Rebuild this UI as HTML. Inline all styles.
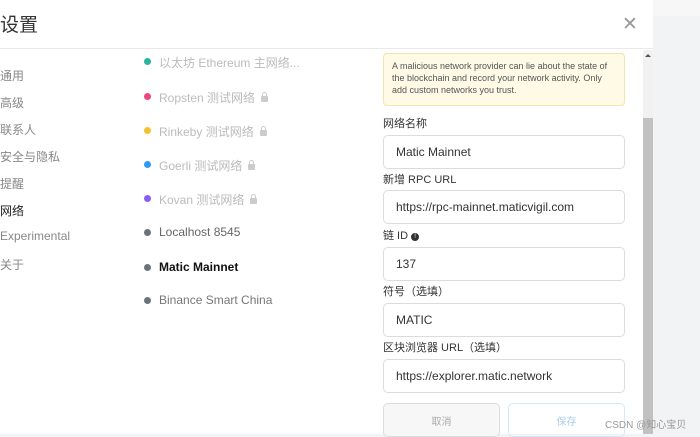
<!DOCTYPE html>
<html><head><meta charset="utf-8"><style>
*{margin:0;padding:0;box-sizing:border-box}
body{width:700px;height:434px;overflow:hidden;background:#f2f3f4;font-family:"Liberation Sans","Noto Sans CJK SC",sans-serif;position:relative}
.modal{position:absolute;left:0;top:0;width:653px;height:434px;background:#fff}
.abs{position:absolute;white-space:nowrap}
.title{left:0;top:10px;font-size:19px;color:#333}
.close{left:622px;top:13px;font-size:19px;color:#999}
.hr{left:0;top:48px;width:653px;height:1px;background:#e8e8e8}
.menu{left:0;font-size:12px;color:#888}
.net{left:159px;font-size:12px;color:#bbb}
.dot{left:144px;width:7px;height:7px;border-radius:50%}
.lock{display:inline-block;width:7px;height:6px;background:#ccc;border-radius:1px;margin-left:6px;position:relative;vertical-align:middle}
.lock:before{content:"";position:absolute;left:1px;top:-4px;width:3px;height:4px;border:1.5px solid #ccc;border-bottom:none;border-radius:3px 3px 0 0}
.warn{left:383px;top:53px;width:242px;height:53px;background:#fefae6;border:1px solid #f5e6a8;border-radius:4px;font-size:9px;line-height:12px;color:#555;padding:6px 8px;white-space:normal}
.lbl{left:383px;font-size:11px;color:#333}
.inp{left:383px;width:242px;height:34px;border:1px solid #dcdcdc;border-radius:5px;font-size:12px;color:#333;padding:9px 12px}
.btn{top:403px;height:34px;border:1px solid #ddd;border-radius:5px;font-size:10px;text-align:center;padding-top:9px}
.sb{left:643px;top:118px;width:10px;height:316px;background:#c1c1c1}
</style></head><body>
<div class="modal">
<div class="abs title">设置</div>
<div class="abs close">✕</div>
<div class="abs hr"></div>
<div class="abs menu" style="top:67px">通用</div>
<div class="abs menu" style="top:94px">高级</div>
<div class="abs menu" style="top:121px">联系人</div>
<div class="abs menu" style="top:148px">安全与隐私</div>
<div class="abs menu" style="top:175px">提醒</div>
<div class="abs menu" style="top:202px;color:#222">网络</div>
<div class="abs menu" style="top:229px">Experimental</div>
<div class="abs menu" style="top:256px">关于</div>

<div class="abs dot" style="top:58px;background:#29b6a0"></div><div class="abs net" style="top:54px">以太坊 Ethereum 主网络...</div>
<div class="abs dot" style="top:93px;background:#f0457a"></div><div class="abs net" style="top:89px">Ropsten 测试网络<span class="lock"></span></div>
<div class="abs dot" style="top:127px;background:#f2c230"></div><div class="abs net" style="top:123px">Rinkeby 测试网络<span class="lock"></span></div>
<div class="abs dot" style="top:161px;background:#3099f2"></div><div class="abs net" style="top:157px">Goerli 测试网络<span class="lock"></span></div>
<div class="abs dot" style="top:195px;background:#8a5cf5"></div><div class="abs net" style="top:191px">Kovan 测试网络<span class="lock"></span></div>
<div class="abs dot" style="top:229px;background:#6a737d"></div><div class="abs net" style="top:225px;color:#666">Localhost 8545</div>
<div class="abs dot" style="top:264px;background:#6a737d"></div><div class="abs net" style="top:260px;color:#111;font-weight:bold">Matic Mainnet</div>
<div class="abs dot" style="top:297px;background:#6a737d"></div><div class="abs net" style="top:293px;color:#777">Binance Smart China</div>

<div class="abs warn">A malicious network provider can lie about the state of the blockchain and record your network activity. Only add custom networks you trust.</div>
<div class="abs lbl" style="top:115px">网络名称</div>
<div class="abs inp" style="top:135px">Matic Mainnet</div>
<div class="abs lbl" style="top:171px">新增 RPC URL</div>
<div class="abs inp" style="top:190px">https://rpc-mainnet.maticvigil.com</div>
<div class="abs lbl" style="top:227px">链 ID <span style="display:inline-block;width:8px;height:8px;border-radius:50%;background:#333;color:#fff;font-size:6px;line-height:8px;text-align:center;vertical-align:1px">!</span></div>
<div class="abs inp" style="top:247px">137</div>
<div class="abs lbl" style="top:283px">符号（选填）</div>
<div class="abs inp" style="top:303px">MATIC</div>
<div class="abs lbl" style="top:339px">区块浏览器 URL（选填）</div>
<div class="abs inp" style="top:359px">https://explorer.matic.network</div>
<div class="abs btn" style="left:383px;width:117px;background:#f7f7f7;color:#aaa">取消</div>
<div class="abs btn" style="left:508px;width:117px;border-color:#d6e8f7;color:#a8cdea">保存</div>
<div class="abs" style="left:643px;top:50px;width:10px;height:384px;background:#f1f1f1"></div>
<div class="abs sb"></div>
<div class="abs" style="left:645px;top:54px;width:0;height:0;border-left:3px solid transparent;border-right:3px solid transparent;border-bottom:3px solid #555"></div>
</div>
<div class="abs" style="left:653px;top:0;width:47px;height:16px;background:#f7f7f8"></div>
<div class="abs" style="left:605px;top:416px;font-size:10px;color:#999">CSDN @知心宝贝</div>
</body></html>
